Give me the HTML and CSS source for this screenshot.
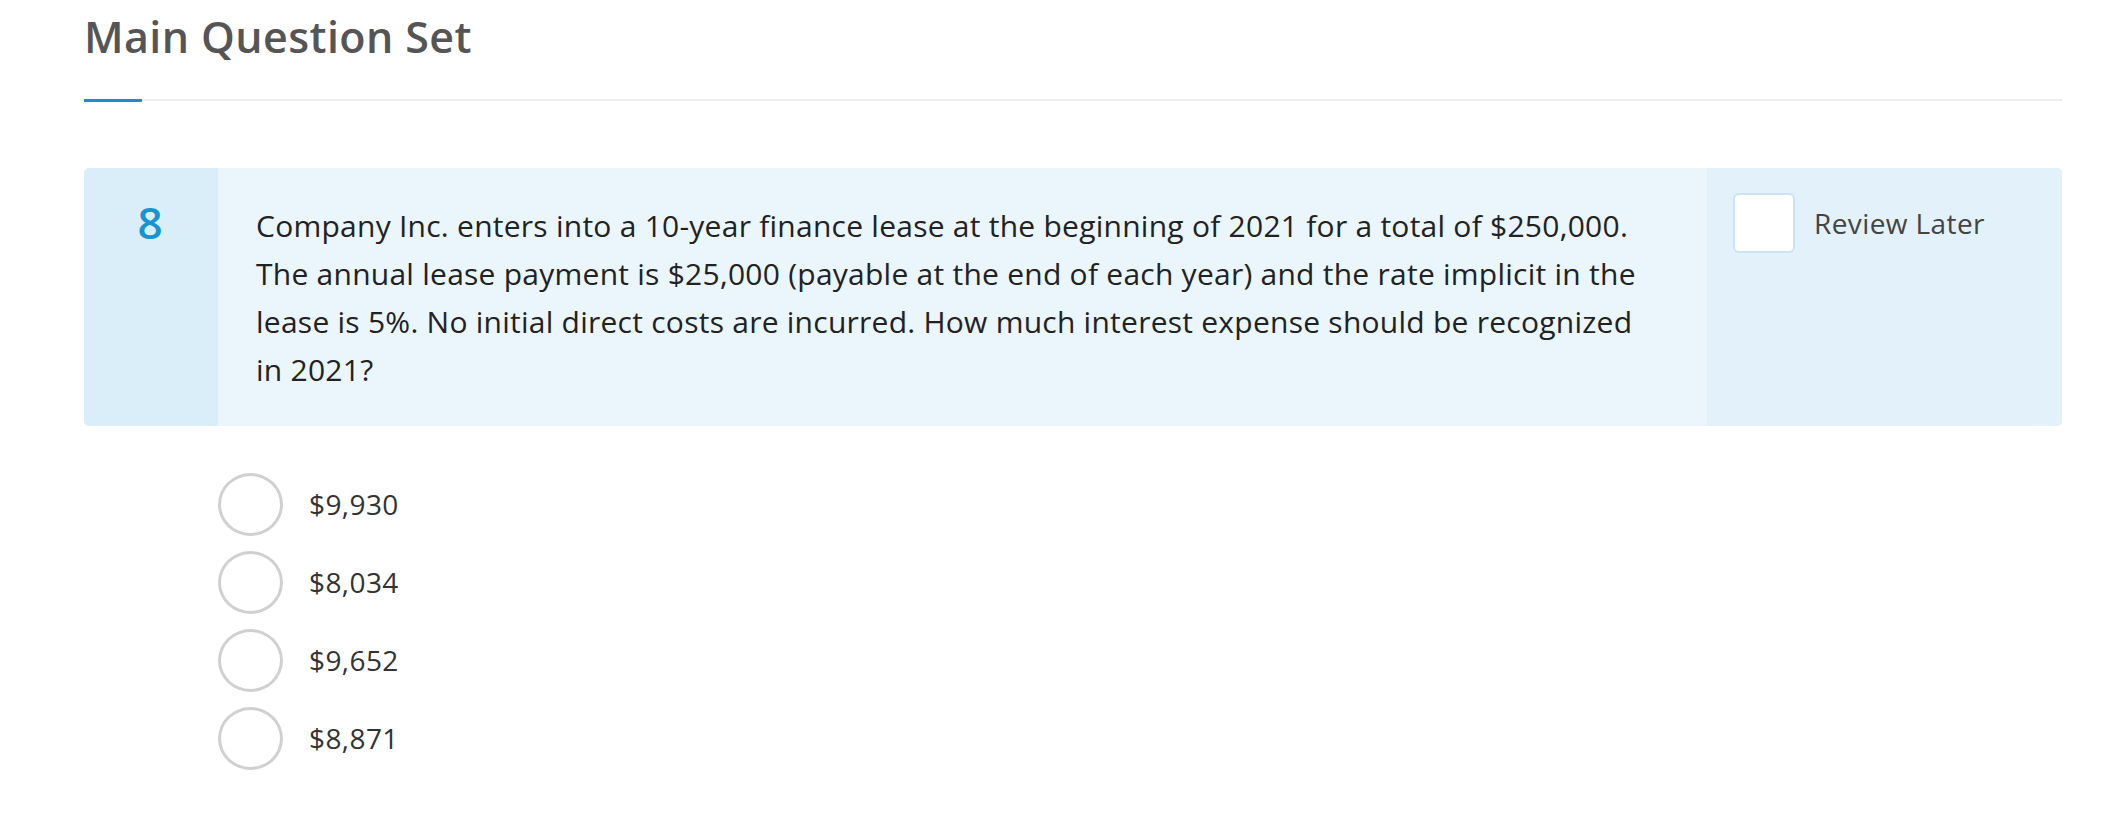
FILE: index.html
```html
<!DOCTYPE html>
<html>
<head>
<meta charset="utf-8">
<link rel="stylesheet" href="styles.css">
</head>
<body>
<div class="page">
  <h1 class="title">Main Question Set</h1>
  <div class="rule"><span class="rule-accent"></span></div>

  <div class="question">
    <div class="q-num">8</div>
    <div class="q-body">Company Inc. enters into a 10-year finance lease at the beginning of 2021 for a total of $250,000. The annual lease payment is $25,000 (payable at the end of each year) and the rate implicit in the lease is 5%. No initial direct costs are incurred. How much interest expense should be recognized in 2021?</div>
    <div class="q-side">
      <label class="review">
        <span class="checkbox"></span>
        <span class="review-text">Review Later</span>
      </label>
    </div>
  </div>

  <ul class="options">
    <li class="option"><span class="radio"></span><span class="opt-text">$9,930</span></li>
    <li class="option"><span class="radio"></span><span class="opt-text">$8,034</span></li>
    <li class="option"><span class="radio"></span><span class="opt-text">$9,652</span></li>
    <li class="option"><span class="radio"></span><span class="opt-text">$8,871</span></li>
  </ul>
</div>
</body>
</html>
```

FILE: styles.css
```css
* { box-sizing: border-box; }
html, body { margin: 0; padding: 0; background: #ffffff; }
body {
  font-family: "Open Sans", "Liberation Sans", sans-serif;
  color: #222;
}
.page {
  padding: 8px 60px 0 84px;
}
.title {
  margin: 0;
  font-size: 43px;
  font-weight: 600;
  color: #555555;
  line-height: 58.6px;
  letter-spacing: 0.4px;
}
.rule {
  margin-top: 32px;
  height: 2px;
  background: #eeeeee;
  position: relative;
}
.rule-accent {
  position: absolute;
  left: 0;
  top: 0;
  width: 58px;
  height: 3px;
  background: #1b8fca;
}
.question {
  margin-top: 67px;
  display: flex;
  border-radius: 5px;
  overflow: hidden;
  background: #eaf5fc;
  min-height: 258px;
}
.q-num {
  width: 134px;
  flex: none;
  background: #d9eef8;
  text-align: center;
  font-size: 44px;
  font-weight: 600;
  line-height: 48px;
  color: #1a93d1;
  padding-top: 30px;
  padding-right: 2px;
}
.q-body {
  flex: 1;
  padding: 34px 56px 32px 38px;
  font-size: 30px;
  letter-spacing: 0.25px;
  line-height: 48px;
  color: #222222;
}
.q-side {
  width: 355px;
  flex: none;
  background: #e2f1fa;
  padding: 25px 0 0 26px;
}
.review {
  display: flex;
  align-items: center;
  gap: 19px;
}
.checkbox {
  width: 62px;
  height: 60px;
  background: #ffffff;
  border: 2px solid #cbe3f2;
  border-radius: 6px;
  flex: none;
}
.review-text {
  font-size: 28px;
  letter-spacing: 0.4px;
  color: #444444;
}
.options {
  list-style: none;
  margin: 47px 0 0 134px;
  padding: 0;
  display: flex;
  flex-direction: column;
  gap: 15px;
}
.option {
  display: flex;
  align-items: center;
  gap: 26px;
  height: 63px;
}
.radio {
  width: 65px;
  height: 63px;
  border: 3px solid #d0d0d0;
  border-radius: 50%;
  background: #fff;
  flex: none;
}
.opt-text {
  font-size: 28px;
  letter-spacing: 0.4px;
  color: #333333;
}
```
